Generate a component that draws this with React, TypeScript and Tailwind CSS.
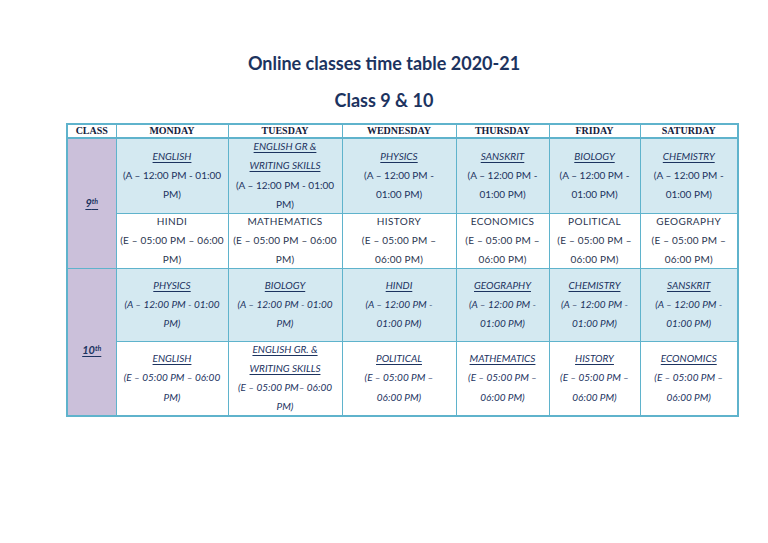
import React from 'react';

interface Entry {
  subject: string;
  time: string[];
  subjectLines?: string[];
}

const days = ['MONDAY', 'TUESDAY', 'WEDNESDAY', 'THURSDAY', 'FRIDAY', 'SATURDAY'];

const nineA: Entry[] = [
  { subject: 'ENGLISH', time: ['(A – 12:00 PM - 01:00', 'PM)'] },
  { subject: '', subjectLines: ['ENGLISH GR &', 'WRITING SKILLS'], time: ['(A – 12:00 PM - 01:00', 'PM)'] },
  { subject: 'PHYSICS', time: ['(A – 12:00 PM -', '01:00 PM)'] },
  { subject: 'SANSKRIT', time: ['(A – 12:00 PM -', '01:00 PM)'] },
  { subject: 'BIOLOGY', time: ['(A – 12:00 PM -', '01:00 PM)'] },
  { subject: 'CHEMISTRY', time: ['(A – 12:00 PM -', '01:00 PM)'] },
];

const nineE: Entry[] = [
  { subject: 'HINDI', time: ['(E – 05:00 PM – 06:00', 'PM)'] },
  { subject: 'MATHEMATICS', time: ['(E – 05:00 PM – 06:00', 'PM)'] },
  { subject: 'HISTORY', time: ['(E – 05:00 PM –', '06:00 PM)'] },
  { subject: 'ECONOMICS', time: ['(E – 05:00 PM –', '06:00 PM)'] },
  { subject: 'POLITICAL', time: ['(E – 05:00 PM –', '06:00 PM)'] },
  { subject: 'GEOGRAPHY', time: ['(E – 05:00 PM –', '06:00 PM)'] },
];

const tenA: Entry[] = [
  { subject: 'PHYSICS', time: ['(A – 12:00 PM - 01:00', 'PM)'] },
  { subject: 'BIOLOGY', time: ['(A – 12:00 PM - 01:00', 'PM)'] },
  { subject: 'HINDI', time: ['(A – 12:00 PM -', '01:00 PM)'] },
  { subject: 'GEOGRAPHY', time: ['(A – 12:00 PM -', '01:00 PM)'] },
  { subject: 'CHEMISTRY', time: ['(A – 12:00 PM -', '01:00 PM)'] },
  { subject: 'SANSKRIT', time: ['(A – 12:00 PM -', '01:00 PM)'] },
];

const tenE: Entry[] = [
  { subject: 'ENGLISH', time: ['(E – 05:00 PM – 06:00', 'PM)'] },
  { subject: '', subjectLines: ['ENGLISH GR. &', 'WRITING SKILLS'], time: ['(E – 05:00 PM– 06:00', 'PM)'] },
  { subject: 'POLITICAL', time: ['(E – 05:00 PM –', '06:00 PM)'] },
  { subject: 'MATHEMATICS', time: ['(E – 05:00 PM –', '06:00 PM)'] },
  { subject: 'HISTORY', time: ['(E – 05:00 PM –', '06:00 PM)'] },
  { subject: 'ECONOMICS', time: ['(E – 05:00 PM –', '06:00 PM)'] },
];

const cellBorder = 'border border-[#5fb3cc] p-0 align-middle text-center';
const headCls = `${cellBorder} border-b-2 font-['Liberation_Serif',serif] text-[10px] font-bold text-[#14213d] leading-[12px]`;

function Cell({ entry, variant, blue }: { entry: Entry; variant: 'nineA' | 'plain' | 'italic'; blue: boolean }) {
  const subjects = entry.subjectLines ?? [entry.subject];
  const subjectCls =
    variant === 'plain' ? 'tracking-[0.4px]' : 'italic underline underline-offset-2 decoration-[0.5px]';
  const timeCls = variant === 'italic' ? 'italic' : variant === 'plain' ? 'tracking-[0.2px]' : '';
  return (
    <td className={`${cellBorder} ${blue ? 'bg-[#d4e9f1]' : 'bg-white'}`}>
      <div className="-my-[2px] flex flex-col items-center leading-[19.3px]">
        {subjects.map((s) => (
          <span key={s} className={subjectCls}>
            {s}
          </span>
        ))}
        {entry.time.map((t) => (
          <span key={t} className={timeCls}>
            {t}
          </span>
        ))}
      </div>
    </td>
  );
}

export default function App() {
  return (
    <div className="w-[768px] h-[543px] bg-white overflow-hidden font-['Lato','Liberation_Sans',sans-serif] text-[#1c335f]">
      <div className="flex flex-col items-center pt-[51px]">
        <h1 className="text-[18px] font-bold leading-[24px]">Online classes time table 2020-21</h1>
        <h2 className="text-[18px] font-bold leading-[24px] mt-[13px]">Class 9 &amp; 10</h2>
      </div>

      <table className="ml-[66px] mt-[11px] w-[671px] table-fixed border-collapse border-2 border-[#5fb3cc] text-[10px]">
        <colgroup>
          <col className="w-[49px]" />
          <col className="w-[112px]" />
          <col className="w-[114px]" />
          <col className="w-[114px]" />
          <col className="w-[93px]" />
          <col className="w-[91px]" />
          <col className="w-[98px]" />
        </colgroup>
        <thead>
          <tr className="h-[14px]">
            <th className={headCls}>CLASS</th>
            {days.map((d) => (
              <th key={d} className={headCls}>
                {d}
              </th>
            ))}
          </tr>
        </thead>
        <tbody>
          <tr className="h-[75px]">
            <td rowSpan={2} className={`${cellBorder} bg-[#cbc0da] text-[11px] font-bold italic`}>
              <span className="underline underline-offset-2">
                9<sup className="text-[7px]">th</sup>
              </span>
            </td>
            {nineA.map((e, i) => (
              <Cell key={i} entry={e} variant="nineA" blue />
            ))}
          </tr>
          <tr className="h-[55px] text-[#2a3550]">
            {nineE.map((e, i) => (
              <Cell key={i} entry={e} variant="plain" blue={false} />
            ))}
          </tr>
          <tr className="h-[73px]">
            <td rowSpan={2} className={`${cellBorder} bg-[#cbc0da] pt-[18px] text-[11px] font-bold italic`}>
              <span className="underline underline-offset-2">
                10<sup className="text-[7px]">th</sup>
              </span>
            </td>
            {tenA.map((e, i) => (
              <Cell key={i} entry={e} variant="italic" blue />
            ))}
          </tr>
          <tr className="h-[73px]">
            {tenE.map((e, i) => (
              <Cell key={i} entry={e} variant="italic" blue={false} />
            ))}
          </tr>
        </tbody>
      </table>
    </div>
  );
}
